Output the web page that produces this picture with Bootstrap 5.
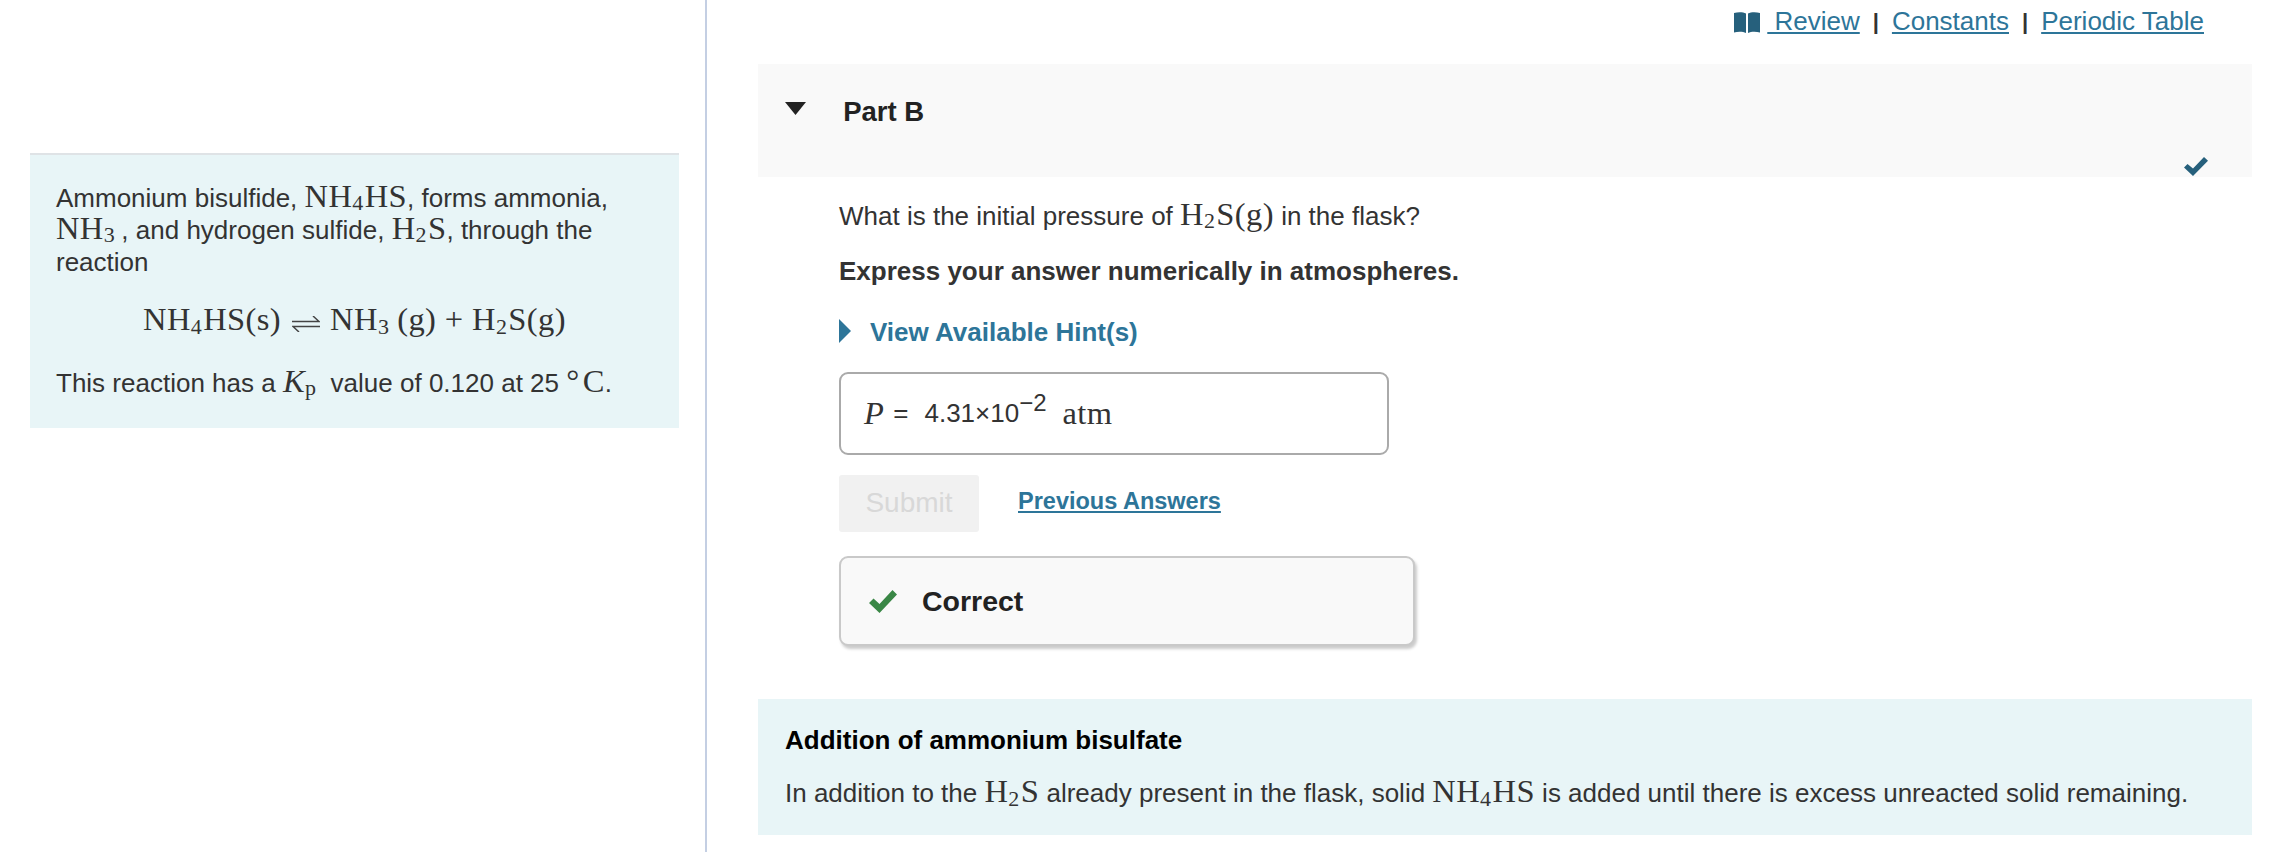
<!doctype html>
<html lang="en">
<head>
<meta charset="utf-8">
<title>Part B</title>
<link href="https://cdn.jsdelivr.net/npm/bootstrap@5.3.0/dist/css/bootstrap.min.css" rel="stylesheet">
<style>
html,body{height:100%;}
body{font-family:"Liberation Sans",Arial,sans-serif;font-size:26px;line-height:32px;color:#333;background:#fff;overflow:hidden;}
.page-wrap{height:852px;}
.left-pane{width:707px;flex:none;border-right:2px solid #c4cfe3;padding:153px 26px 0 30px;}
.intro-box{background:#e8f5f7;border-top:2px solid #dfe3e6;padding:26.500px 26px 0;height:275px;}
.intro-box p{margin:0;}
.math{font-family:"Liberation Serif","Times New Roman",serif;font-size:32.500px;letter-spacing:.4px;line-height:0;}
.math sub{font-size:22px;bottom:-.18em;line-height:0;margin:0 1px 0 0;}
.math i{font-style:italic;}
.kp-sym{margin-right:6px;}
.eq-line{text-align:center;margin:27.500px 0 29.500px!important;}
.eq-arrow{width:28px;height:16px;vertical-align:-2px;margin:0 2px;}
.right-pane{min-width:0;padding:0 32px 0 51px;}
.top-links{height:64px;padding-right:48px;padding-top:5px;}
.top-links a,.link-blue{color:#2d7599;text-decoration:underline;}
.top-links .sep{margin:0 13px;font-size:22px;font-weight:700;position:relative;top:-1px;}
.book-ico{width:26px;height:21px;vertical-align:-3px;margin-right:7px;}
.part-head{height:113px;background:#f9f9f9;padding:32px 0 0 27px;position:relative;}
.part-title{font-weight:700;font-size:27.500px;color:#222;margin-left:30px;}
.caret-down{width:21px;height:13px;vertical-align:6px;}
.done-check{position:absolute;right:44px;bottom:1px;width:24px;height:19px;}
.part-body{padding:22.500px 0 0 81px;}
.part-body p{margin:0;}
.q-bold{font-weight:700;margin-top:23px!important;}
.hint-row{margin-top:29px;font-weight:700;color:#2d7599;}
.hint-tri{width:12px;height:24px;margin-right:19px;vertical-align:-2px;}
.answer-box{width:550px;height:83px;border:2px solid #aaa;border-radius:9px;margin-top:24px;padding-left:23px;font-size:26px;}
.answer-box .eq-sign{margin:0 16px 0 9px;}
.answer-box sup{font-size:24px;top:-.45em;}
.submit-btn{width:140px;height:57px;background:#f1f1f1;color:#d8d8d8;border:0;border-radius:3px;font-size:28px;padding:0;}
.action-row{margin-top:20px;}
.prev-link{font-weight:700;font-size:23.500px;margin-left:39px;position:relative;top:-2px;}
.result-box{width:576px;height:90px;border:2px solid #c9c9c9;border-radius:9px;background:#f9f9f9;box-shadow:2px 3px 3px #ccc;margin-top:24.500px;padding-left:28px;font-weight:700;font-size:28.500px;color:#222;}
.green-check{width:28px;height:23px;margin-right:25px;}
.note-box{background:#e8f5f7;height:136px;margin-top:52.500px;padding:25.500px 27px 0;}
.note-box h6{font-size:26px;line-height:32px;font-weight:700;color:#000;margin:0 0 21px;}
.note-box p{margin:0;white-space:nowrap;}
</style>
</head>
<body>
<div class="d-flex page-wrap">
  <div class="left-pane">
    <div class="intro-box">
      <p>Ammonium bisulfide, <span class="math">NH<sub>4</sub>HS</span>, forms ammonia, <span class="math">NH<sub>3</sub></span>&thinsp;, and hydrogen sulfide, <span class="math">H<sub>2</sub>S</span>, through the reaction</p>
      <p class="eq-line"><span class="math">NH<sub>4</sub>HS(s) <svg class="eq-arrow" viewBox="0 0 28 16"><path fill="none" stroke="#444" stroke-width="1.500" d="M0 5.500h27L21 0M28 10.500H1L7 16"/></svg> NH<sub>3</sub>&thinsp;(g) + H<sub>2</sub>S(g)</span></p>
      <p>This reaction has a <span class="math kp-sym"><i>K</i><sub>p</sub></span> value of 0.120 at 25 <span class="math">°&hairsp;C</span>.</p>
    </div>
  </div>
  <div class="right-pane flex-grow-1">
    <div class="top-links text-end">
      <a href="#"><svg class="book-ico" viewBox="0 0 26 21"><path fill="#26607c" d="M0 1c4-1 9-1 12 .5V21c-3-1.500-8-1.500-12-.5zM14 1.500C17 0 22 0 26 1v19.500c-4-1-9-1-12 .5z"/></svg> Review</a><span class="sep">|</span><a href="#">Constants</a><span class="sep">|</span><a href="#">Periodic Table</a>
    </div>
    <div class="part-head">
      <svg class="caret-down" viewBox="0 0 21 13"><path fill="#222" d="M0 0h21L10.500 13z"/></svg>
      <span class="part-title">Part B</span>
      <svg class="done-check" viewBox="0 0 24 19"><path fill="#26607c" d="M0 10.500L3.500 7 9 11.500 20 0l4 3.800L9 19z"/></svg>
    </div>
    <div class="part-body">
      <p>What is the initial pressure of <span class="math">H<sub>2</sub>S(g)</span> in the flask?</p>
      <p class="q-bold">Express your answer numerically in atmospheres.</p>
      <div class="hint-row"><svg class="hint-tri" viewBox="0 0 12 24"><path fill="#2d7599" d="M0 0l12 12L0 24z"/></svg>View Available Hint(s)</div>
      <div class="answer-box d-flex align-items-center"><span class="math"><i>P</i></span><span class="eq-sign">=</span><span>4.31×10<sup>−2</sup></span><span class="math ms-3">atm</span></div>
      <div class="action-row d-flex align-items-center">
        <button class="submit-btn" disabled>Submit</button>
        <a href="#" class="link-blue prev-link">Previous Answers</a>
      </div>
      <div class="result-box d-flex align-items-center"><svg class="green-check" viewBox="0 0 28 23"><path fill="#3a8746" d="M0 13l4.500-4.500L10.500 14 23.500 0 28 4.500 10.500 23z"/></svg>Correct</div>
    </div>
    <div class="note-box">
      <h6>Addition of ammonium bisulfate</h6>
      <p>In addition to the <span class="math">H<sub>2</sub>S</span> already present in the flask, solid <span class="math">NH<sub>4</sub>HS</span> is added until there is excess unreacted solid remaining.</p>
    </div>
  </div>
</div>
<script src="https://cdn.jsdelivr.net/npm/bootstrap@5.3.0/dist/js/bootstrap.bundle.min.js"></script>
</body>
</html>
